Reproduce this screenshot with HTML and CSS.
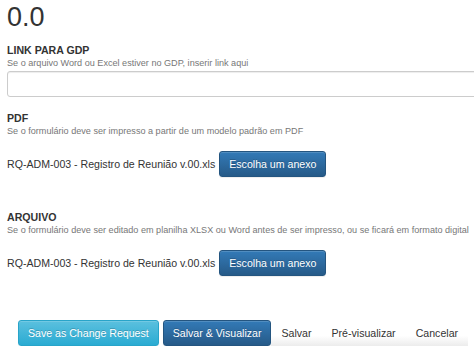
FILE: index.html
```html
<!DOCTYPE html>
<html lang="pt-BR">
<head>
    <meta charset="UTF-8">
    <meta name="viewport" content="width=device-width, initial-scale=1.0">
    <title>Formulário</title>
    <link rel="stylesheet" href="styles.css">
</head>
<body>
    <div class="form-page">
        <h1 class="version">0.0</h1>

        <div class="form-group">
            <label for="gdpLink">LINK PARA GDP</label>
            <p class="help">Se o arquivo Word ou Excel estiver no GDP, inserir link aqui</p>
            <input type="text" id="gdpLink" class="text-input">
        </div>

        <div class="form-group">
            <label>PDF</label>
            <p class="help">Se o formulário deve ser impresso a partir de um modelo padrão em PDF</p>
            <div class="file-row">
                <span class="file-name">RQ-ADM-003 - Registro de Reunião v.00.xls</span>
                <button class="btn btn-primary">Escolha um anexo</button>
            </div>
        </div>

        <div class="form-group">
            <label>ARQUIVO</label>
            <p class="help">Se o formulário deve ser editado em planilha XLSX ou Word antes de ser impresso, ou se ficará em formato digital</p>
            <div class="file-row">
                <span class="file-name">RQ-ADM-003 - Registro de Reunião v.00.xls</span>
                <button class="btn btn-primary">Escolha um anexo</button>
            </div>
        </div>

        <div class="form-actions">
            <button class="btn btn-info">Save as Change Request</button>
            <button class="btn btn-primary">Salvar &amp; Visualizar</button>
            <button class="btn btn-default">Salvar</button>
            <button class="btn btn-default">Pré-visualizar</button>
            <button class="btn btn-default">Cancelar</button>
        </div>
    </div>
</body>
</html>
```

FILE: styles.css
```css
* {
    margin: 0;
    padding: 0;
    box-sizing: border-box;
}

body {
    font-family: 'Liberation Sans', Arial, Helvetica, sans-serif;
    font-size: 10.6px;
    color: #333;
    background: white;
    overflow: hidden;
}

.form-page {
    width: 490px;
    padding: 0 0 0 7px;
}

.version {
    font-size: 27px;
    font-weight: normal;
    line-height: 30px;
    margin-top: 2px;
    margin-bottom: 11px;
}

.form-group {
    margin-bottom: 14px;
}

.form-group label {
    display: block;
    font-weight: bold;
    font-size: 10.6px;
    line-height: 14px;
}

.help {
    color: #777;
    font-size: 9.1px;
    line-height: 13px;
    margin-bottom: 1px;
}

.text-input {
    display: block;
    width: 100%;
    height: 26px;
    border: 1px solid #ccc;
    border-radius: 3px;
    box-shadow: inset 0 1px 1px rgba(0,0,0,0.075);
    font-size: 10.6px;
}

.file-row {
    display: flex;
    align-items: center;
    gap: 4px;
    margin-top: 13px;
    padding-bottom: 19px;
}

.btn {
    font-family: inherit;
    font-size: 10.6px;
    height: 26px;
    padding: 0 9px;
    border: 1px solid transparent;
    border-radius: 3px;
    cursor: pointer;
}

.btn-primary {
    color: white;
    background: linear-gradient(to bottom, #337ab7 0%, #265a88 100%);
    border-color: #245580;
    text-shadow: 0 -1px 0 rgba(0,0,0,0.2);
    box-shadow: inset 0 1px 0 rgba(255,255,255,0.15), 0 1px 1px rgba(0,0,0,0.075);
}

.btn-info {
    color: white;
    background: linear-gradient(to bottom, #5bc0de 0%, #2aabd2 100%);
    border-color: #28a4c9;
    text-shadow: 0 -1px 0 rgba(0,0,0,0.2);
    box-shadow: inset 0 1px 0 rgba(255,255,255,0.15), 0 1px 1px rgba(0,0,0,0.075);
}

.btn-default {
    color: #333;
    background: linear-gradient(to bottom, #fff 0%, #fff 60%, #ececec 100%);
    border: none;
    border-radius: 0;
    padding: 0 10px;
}

.form-actions {
    display: flex;
    padding-left: 11px;
    margin-top: 25px;
}

.form-actions .btn-info {
    margin-right: 4px;
}
```
